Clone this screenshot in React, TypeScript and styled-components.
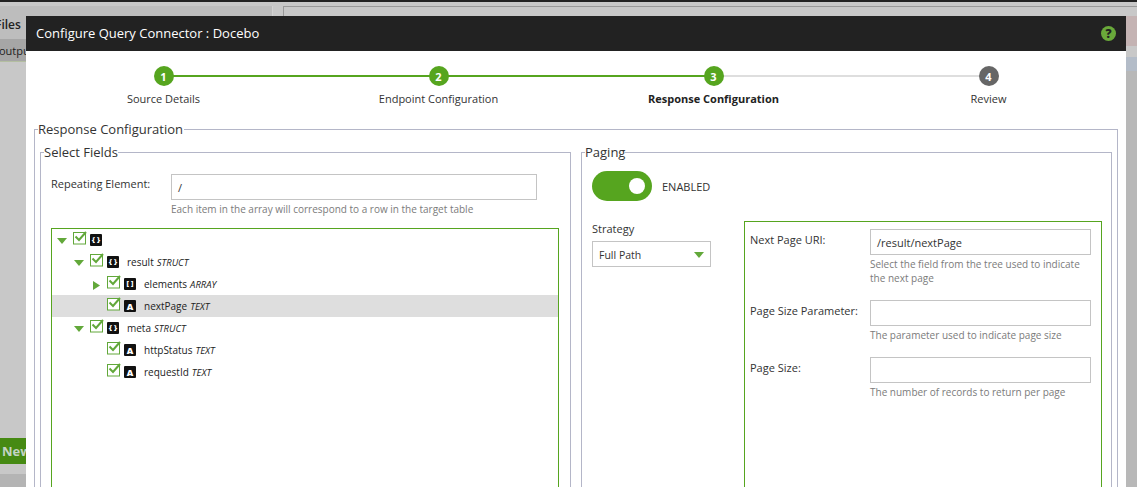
import React from "react";
import styled, { createGlobalStyle } from "styled-components";

const Global = createGlobalStyle`
  html, body { margin: 0; padding: 0; height: 100%; overflow: hidden; }
  body { font-family: "Open Sans", "Noto Sans", sans-serif; font-size: 11px; color: #333; background: #c8c8c8; }
  #root { width: 1137px; height: 487px; overflow: hidden; position: relative; }
  * { box-sizing: border-box; }
`;

const Backdrop = styled.div`
  width: 1137px; height: 487px; position: relative; background: #c8c8c8; overflow: hidden;
  border-top: 2px solid #222;
`;
const BackTab = styled.div`
  position: absolute; left: 0; top: 4px; width: 273px; height: 480px; background: #bdbdbd;
  border-right: 1px solid #d2d2d2;
`;
const BackPaneBody = styled.div`
  position: absolute; left: 0; top: 60px; width: 273px; height: 420px; background: #c8c8c8;
`;
const BackFiles = styled.div`
  position: absolute; left: 0; top: 14px; font-size: 12px; font-weight: 600; color: #222; margin-left: -5px;
`;
const BackOutput = styled.div`
  position: absolute; left: 0; top: 37px; width: 30px; height: 23px; background: #a6a6a6; color: #222;
  font-size: 11px; line-height: 23px; overflow: hidden; border-bottom: 1px solid #b3bea0; text-indent: -1px;
`;
const BackNew = styled.div`
  position: absolute; left: 0; top: 436px; width: 30px; height: 26px; background: #468a13; color: #c4d4c4;
  font-size: 13px; font-weight: 700; line-height: 26px; padding-left: 2px; overflow: hidden;
`;
const BackFoot = styled.div`
  position: absolute; left: 0; top: 472px; width: 30px; height: 15px; background: #b4b4b4;
`;
const BackFrame = styled.div`
  position: absolute; left: 283px; top: 4px; width: 860px; height: 500px; border-left: 1px solid #999; border-top: 1px solid #999;
`;
const SideTint = styled.div<{ $top: number; $h: number; $c: string }>`
  position: absolute; left: 1126px; width: 11px;
  top: ${(p) => p.$top}px; height: ${(p) => p.$h}px; background: ${(p) => p.$c};
`;

const Modal = styled.div`
  position: absolute; left: 26px; top: 14px; width: 1100px; height: 480px; background: #fff;
  display: flex; flex-direction: column;
`;
const Header = styled.div`
  height: 35px; background: #222; color: #fff; display: flex; align-items: center; justify-content: space-between;
  padding: 0 10px; font-size: 13px; flex: none;
`;
const Title = styled.span`
  margin-top: -1px;
`;
const Help = styled.div`
  width: 15px; height: 15px; border-radius: 50%; background: #6aa93a; color: #222; font-size: 12px; font-weight: 800;
  display: flex; align-items: center; justify-content: center; line-height: 1;
`;
const Stepper = styled.div`
  display: grid; grid-template-columns: repeat(4, 275px); flex: none; height: 71px; padding-top: 15px;
`;
const Step = styled.div`
  display: flex; flex-direction: column; align-items: center; position: relative;
`;
const Line = styled.div<{ $on: boolean }>`
  position: absolute; left: 50%; width: 275px; top: 9px; height: 2px; background: ${(p) => (p.$on ? "#56a51f" : "#dedede")};
`;
const Dot = styled.div<{ $on: boolean }>`
  width: 20px; height: 20px; border-radius: 50%; background: ${(p) => (p.$on ? "#56a51f" : "#666")}; color: #fff;
  font-size: 11px; font-weight: 700; display: flex; align-items: center; justify-content: center; position: relative; z-index: 1;
`;
const StepLabel = styled.div<{ $b?: boolean }>`
  margin-top: 5px; font-size: 11px; line-height: 15px; color: ${(p) => (p.$b ? "#222" : "#333")}; font-weight: ${(p) => (p.$b ? 700 : 400)};
`;
const OuterSet = styled.fieldset`
  margin: 0 8px 0 8px; padding: 0 5px; border: 1px solid #b4b6c8; min-width: 0; display: block; height: 400px;
  flex: none;
`;
const Legend = styled.legend`
  padding: 0 1px 0 0; margin-left: -2px; font-size: 13px; line-height: 15px; color: #333;
`;
const Columns = styled.div`
  display: grid; grid-template-columns: 531px 531px; column-gap: 10px; margin-top: 7px;
`;
const InnerSet = styled.fieldset`
  margin: 0; padding: 0; border: 1px solid #b4b6c8; min-width: 0; height: 400px;
`;
const InnerLegend = styled.legend`
  padding: 0; margin-left: 3px; font-size: 13px; line-height: 17px; color: #333;
`;
const RepeatRow = styled.div`
  display: flex; padding: 13px 0 0 10px; align-items: flex-start;
`;
const RepeatLabel = styled.label`
  width: 120px; font-size: 11px; line-height: 20px; color: #333;
`;
const Input = styled.div<{ $w: number; $h?: number }>`
  width: ${(p) => p.$w}px; height: ${(p) => p.$h ?? 26}px; border: 1px solid #c4c4c4; background: #fff; color: #333;
  font-size: 11px; padding-left: 6px; display: flex; align-items: center;
`;
const Hint = styled.div<{ $w?: number }>`
  font-size: 10px; line-height: 14px; color: #7b7b7b; margin-top: 2px; ${(p) => (p.$w ? `width:${p.$w}px;` : "")}
`;
const FieldCol = styled.div``;
const Tree = styled.div`
  margin: 12px 0 0 10px; width: 508px; height: 300px; border: 1px solid #56a51f;
`;
const TreeRow = styled.div<{ $sel?: boolean; $depth: number }>`
  height: 22px; display: flex; align-items: center; position: relative; background: ${(p) => (p.$sel ? "#dedede" : "transparent")};
  padding-left: ${(p) => 4 + p.$depth * 17}px; font-size: 10px; color: #222;
`;
const ArrowSlot = styled.span`
  width: 12px; height: 12px; display: flex; align-items: center; justify-content: center; flex: none; margin-right: 5px; margin-top: 2px;
`;
const Check = styled.span`
  width: 13px; height: 13px; flex: none; position: relative; margin-top: -5px; display: block;
`;
const Badge = styled.span<{ $letter: boolean }>`
  width: 12px; height: 12px; background: #111; color: #fff; border-radius: 1px; flex: none; margin-left: 4px;
  font-size: ${(p) => (p.$letter ? 9 : 7.5)}px; font-weight: 800; display: flex; align-items: center; justify-content: center; line-height: 1;
`;
const NodeName = styled.span`
  margin-left: 8px; font-size: 10px;
`;
const NodeType = styled.em`
  font-style: italic; font-size: 9.5px; margin-left: 3px;
`;
const SwitchRow = styled.div`
  display: flex; align-items: center; padding: 9px 0 0 10px; height: 41px;
`;
const Track = styled.div`
  width: 60px; height: 30px; border-radius: 15px; background: #56a51f; position: relative; flex: none;
`;
const Knob = styled.div`
  position: absolute; width: 16px; height: 16px; right: 7px; top: 7px; border-radius: 50%; background: #fff;
`;
const SwitchText = styled.span`
  margin-left: 10px; margin-top: 1px; font-size: 11px; color: #333;
`;
const PagingBody = styled.div`
  display: flex; align-items: flex-start; padding: 19px 0 0 10px;
`;
const StrategyCol = styled.div`
  width: 152px; flex: none;
`;
const StrategyLabel = styled.div`
  font-size: 11px; line-height: 15px; color: #333;
`;
const Select = styled.div`
  width: 119px; height: 26px; margin-top: 5px; border: 1px solid #c4c4c4; display: flex; align-items: center; justify-content: space-between;
  padding: 1px 6px 0; font-size: 10.5px; color: #333;
`;
const UriBox = styled.div`
  width: 358px; height: 300px; border: 1px solid #56a51f; padding: 7px 0 0 5px;
`;
const UriRow = styled.div<{ $h: number }>`
  display: flex; height: ${(p) => p.$h}px;
`;
const UriLabel = styled.label`
  width: 120px; font-size: 11px; line-height: 22px; color: #333; flex: none;
`;

const CheckIcon = () => (
  <Check>
    <svg width="15" height="15" viewBox="0 0 15 15" style={{ position: "absolute", left: 0, top: -1 }}>
      <rect x="0.5" y="2.5" width="12" height="11.5" fill="#fff" stroke="#62a83a" />
      <path d="M2.5 6.5 L6 10 L13 2" fill="none" stroke="#62a83a" strokeWidth="2" />
    </svg>
  </Check>
);
const Down = () => (
  <svg width="10" height="6" viewBox="0 0 10 6"><path d="M0 0h10L5 6z" fill="#62a83a" /></svg>
);
const Right = () => (
  <svg width="7" height="9" viewBox="0 0 7 9"><path d="M0 0l7 4.5-7 4.5z" fill="#62a83a" /></svg>
);

type Node = { depth: number; arrow?: "down" | "right"; badge: string; name?: string; type?: string; sel?: boolean };
const nodes: Node[] = [
  { depth: 0, arrow: "down", badge: "{ }" },
  { depth: 1, arrow: "down", badge: "{ }", name: "result", type: "STRUCT" },
  { depth: 2, arrow: "right", badge: "[ ]", name: "elements", type: "ARRAY" },
  { depth: 2, badge: "A", name: "nextPage", type: "TEXT", sel: true },
  { depth: 1, arrow: "down", badge: "{ }", name: "meta", type: "STRUCT" },
  { depth: 2, badge: "A", name: "httpStatus", type: "TEXT" },
  { depth: 2, badge: "A", name: "requestId", type: "TEXT" },
];
const steps = [
  { n: 1, label: "Source Details" },
  { n: 2, label: "Endpoint Configuration" },
  { n: 3, label: "Response Configuration", bold: true },
  { n: 4, label: "Review" },
];

export default function App() {
  return (
    <>
      <Global />
      <Backdrop>
        <BackTab />
        <BackPaneBody />
        <BackFiles>Files</BackFiles>
        <BackOutput>output</BackOutput>
        <BackNew>New</BackNew>
        <BackFoot />
        <BackFrame />
        <SideTint $top={14} $h={30} $c="#c4b3b3" />
        <SideTint $top={55} $h={14} $c="#b3bcc8" />
        <SideTint $top={69} $h={420} $c="#b8b8b8" />
        <Modal>
          <Header>
            <Title>Configure Query Connector : Docebo</Title>
            <Help>?</Help>
          </Header>
          <Stepper>
            {steps.map((s) => (
              <Step key={s.n}>
                {s.n < 4 && <Line $on={s.n < 3} />}
                <Dot $on={s.n < 4}>{s.n}</Dot>
                <StepLabel $b={s.bold}>{s.label}</StepLabel>
              </Step>
            ))}
          </Stepper>
          <OuterSet>
            <Legend>Response Configuration</Legend>
            <Columns>
              <InnerSet>
                <InnerLegend>Select Fields</InnerLegend>
                <RepeatRow>
                  <RepeatLabel>Repeating Element:</RepeatLabel>
                  <FieldCol>
                    <Input $w={366}>/</Input>
                    <Hint>Each item in the array will correspond to a row in the target table</Hint>
                  </FieldCol>
                </RepeatRow>
                <Tree>
                  {nodes.map((n, i) => (
                    <TreeRow key={i} $depth={n.depth} $sel={n.sel}>
                      <ArrowSlot>{n.arrow === "down" ? <Down /> : n.arrow === "right" ? <Right /> : null}</ArrowSlot>
                      <CheckIcon />
                      <Badge $letter={n.badge === "A"}>{n.badge}</Badge>
                      {n.name && (
                        <NodeName>
                          {n.name}
                          <NodeType>{n.type}</NodeType>
                        </NodeName>
                      )}
                    </TreeRow>
                  ))}
                </Tree>
              </InnerSet>
              <InnerSet>
                <InnerLegend>Paging</InnerLegend>
                <SwitchRow>
                  <Track><Knob /></Track>
                  <SwitchText>ENABLED</SwitchText>
                </SwitchRow>
                <PagingBody>
                  <StrategyCol>
                    <StrategyLabel>Strategy</StrategyLabel>
                    <Select>
                      <span>Full Path</span>
                      <Down />
                    </Select>
                  </StrategyCol>
                  <UriBox>
                    <UriRow $h={71}>
                      <UriLabel>Next Page URI:</UriLabel>
                      <div>
                        <Input $w={221}>/result/nextPage</Input>
                        <Hint $w={210}>Select the field from the tree used to indicate the next page</Hint>
                      </div>
                    </UriRow>
                    <UriRow $h={57}>
                      <UriLabel>Page Size Parameter:</UriLabel>
                      <div>
                        <Input $w={221} />
                        <Hint>The parameter used to indicate page size</Hint>
                      </div>
                    </UriRow>
                    <UriRow $h={57}>
                      <UriLabel>Page Size:</UriLabel>
                      <div>
                        <Input $w={221} />
                        <Hint>The number of records to return per page</Hint>
                      </div>
                    </UriRow>
                  </UriBox>
                </PagingBody>
              </InnerSet>
            </Columns>
          </OuterSet>
        </Modal>
      </Backdrop>
    </>
  );
}
